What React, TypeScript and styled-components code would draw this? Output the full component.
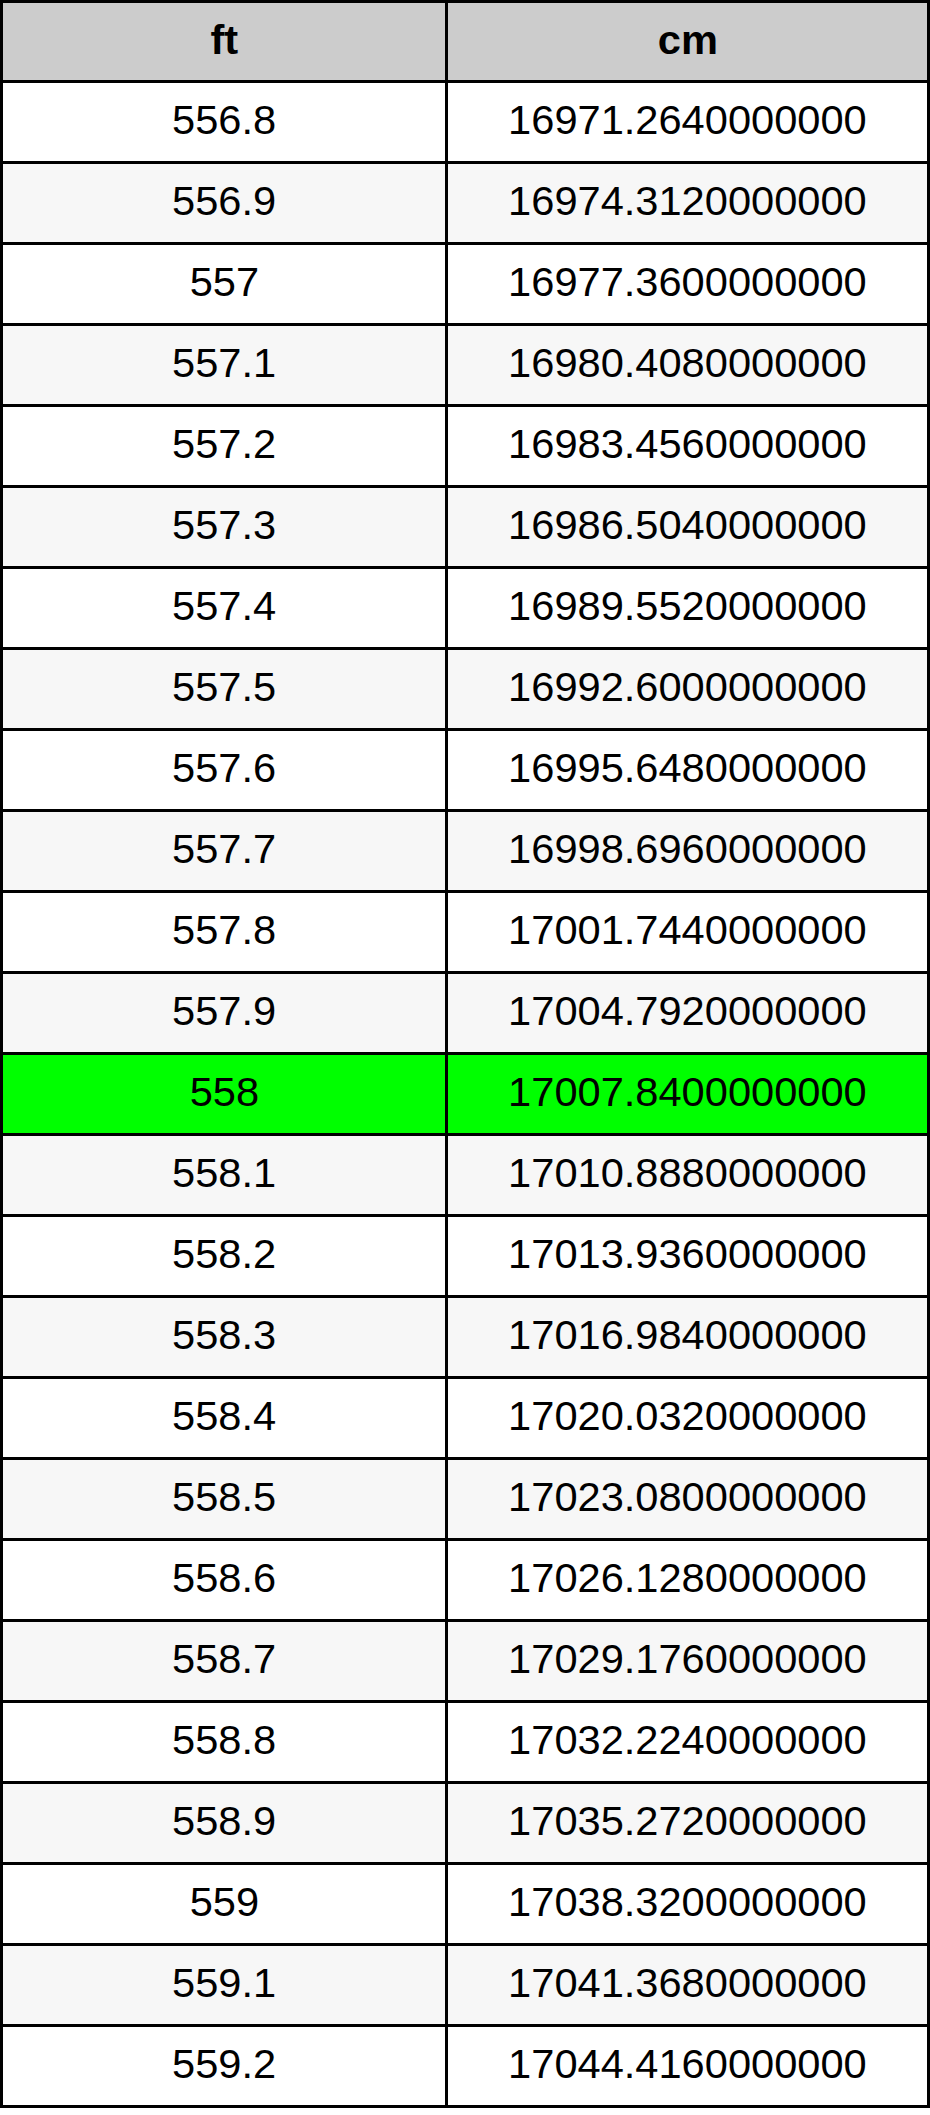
import React from "react";
import styled, { createGlobalStyle } from "styled-components";

const GlobalStyle = createGlobalStyle`
  html, body {
    margin: 0;
    padding: 0;
    background: #ffffff;
  }
  body {
    font-family: "Liberation Sans", Arial, sans-serif;
    color: #000000;
  }
`;

const Table = styled.table`
  width: 930px;
  table-layout: fixed;
  border-collapse: separate;
  border-spacing: 0;
  border-top: 3px solid #000;
  border-left: 3px solid #000;
`;

const HeadCell = styled.th<{ $w: number }>`
  box-sizing: border-box;
  width: ${(p) => p.$w}px;
  height: 80px;
  padding: 0 0 2px;
  background: #cccccc;
  border-right: 3px solid #000;
  border-bottom: 3px solid #000;
  font-size: 40px;
  font-weight: 700;
  text-align: center;
  vertical-align: middle;
`;

const Row = styled.tr<{ $bg: string }>`
  background: ${(p) => p.$bg};
`;

const Cell = styled.td`
  box-sizing: border-box;
  height: 81px;
  padding: 0 0 4px;
  border-right: 3px solid #000;
  border-bottom: 3px solid #000;
  font-size: 40px;
  text-align: center;
  vertical-align: middle;
`;

const Wide = styled.span`
  display: inline-block;
  transform: scaleX(1.04);
`;

const rows: [string, string][] = [
  ["556.8", "16971.2640000000"],
  ["556.9", "16974.3120000000"],
  ["557", "16977.3600000000"],
  ["557.1", "16980.4080000000"],
  ["557.2", "16983.4560000000"],
  ["557.3", "16986.5040000000"],
  ["557.4", "16989.5520000000"],
  ["557.5", "16992.6000000000"],
  ["557.6", "16995.6480000000"],
  ["557.7", "16998.6960000000"],
  ["557.8", "17001.7440000000"],
  ["557.9", "17004.7920000000"],
  ["558", "17007.8400000000"],
  ["558.1", "17010.8880000000"],
  ["558.2", "17013.9360000000"],
  ["558.3", "17016.9840000000"],
  ["558.4", "17020.0320000000"],
  ["558.5", "17023.0800000000"],
  ["558.6", "17026.1280000000"],
  ["558.7", "17029.1760000000"],
  ["558.8", "17032.2240000000"],
  ["558.9", "17035.2720000000"],
  ["559", "17038.3200000000"],
  ["559.1", "17041.3680000000"],
  ["559.2", "17044.4160000000"],
];

export default function App() {
  return (
    <>
      <GlobalStyle />
      <Table>
        <thead>
          <tr>
            <HeadCell $w={445}>
              <Wide>ft</Wide>
            </HeadCell>
            <HeadCell $w={482}>
              <Wide>cm</Wide>
            </HeadCell>
          </tr>
        </thead>
        <tbody>
          {rows.map(([ft, cm], i) => {
            const bg = ft === "558" ? "#00ff00" : i % 2 === 0 ? "#ffffff" : "#f7f7f7";
            return (
              <Row key={ft} $bg={bg}>
                <Cell>
                  <Wide>{ft}</Wide>
                </Cell>
                <Cell>
                  <Wide>{cm}</Wide>
                </Cell>
              </Row>
            );
          })}
        </tbody>
      </Table>
    </>
  );
}
